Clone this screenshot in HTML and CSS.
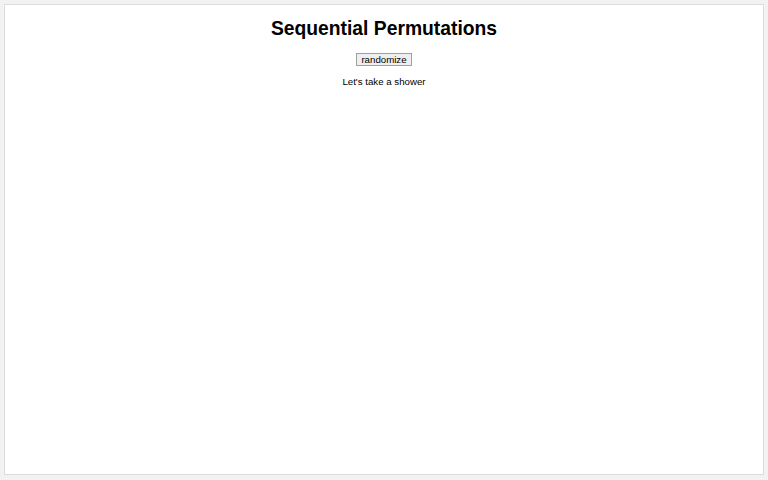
FILE: index.html
```html
<!DOCTYPE html>
<html>
<head>
<meta charset="utf-8">
<link rel="stylesheet" href="styles.css">
</head>
<body>
<div class="panel">
  <h1 class="title">Sequential Permutations</h1>
  <button class="btn">randomize</button>
  <p class="line">Let's take a shower</p>
</div>
</body>
</html>
```
FILE: styles.css
```css
html, body { margin: 0; padding: 0; }
body {
  background: #f2f2f2;
  font-family: "Liberation Sans", Arial, sans-serif;
  padding: 4px 4px 5px 4px;
  height: 480px;
  box-sizing: border-box;
}
.panel {
  background: #fff;
  border: 1px solid #dcdcdc;
  height: 100%;
  box-sizing: border-box;
  display: flex;
  flex-direction: column;
  align-items: center;
}
.title {
  font-size: 19.3px;
  font-weight: bold;
  margin: 12px 0 0 0;
  line-height: 23px;
  color: #000;
}
.btn {
  margin-top: 13px;
  font-family: "Liberation Sans", Arial, sans-serif;
  font-size: 9.7px;
  line-height: 11px;
  padding: 0 4px;
  background: #efefef;
  border: 1px solid #a0a0a0;
  border-radius: 0;
  color: #000;
}
.line {
  font-size: 9.7px;
  line-height: 11px;
  margin: 10px 0 0 0;
  color: #000;
}
```
